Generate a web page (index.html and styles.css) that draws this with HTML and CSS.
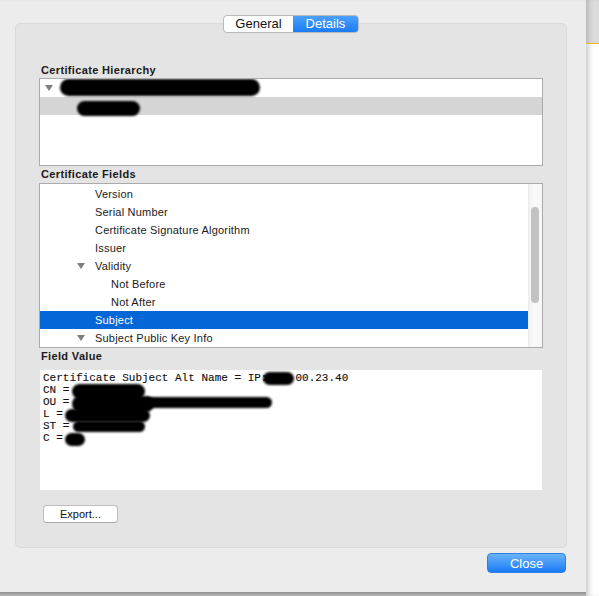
FILE: index.html
```html
<!DOCTYPE html>
<html lang="en">
<head>
    <meta charset="UTF-8">
    <meta name="viewport" content="width=device-width, initial-scale=1.0">
    <title>Certificate Details</title>
    <link rel="stylesheet" href="styles.css">
</head>
<body>
    <div class="screen">
        <div class="window-col">
            <div class="window">
                <div class="group">
                    <div class="tabs">
                        <span class="tab">General</span>
                        <span class="tab active">Details</span>
                    </div>

                    <h4 class="label">Certificate Hierarchy</h4>
                    <div class="list hierarchy">
                        <div class="row">
                            <span class="disclosure root"></span>
                            <span class="redact h1a"></span>
                        </div>
                        <div class="row gray">
                            <span class="redact h2"></span>
                        </div>
                    </div>

                    <h4 class="label">Certificate Fields</h4>
                    <div class="list fields">
                        <div class="rows">
                            <div class="row lvl1">Version</div>
                            <div class="row lvl1">Serial Number</div>
                            <div class="row lvl1">Certificate Signature Algorithm</div>
                            <div class="row lvl1">Issuer</div>
                            <div class="row lvl1"><span class="disclosure"></span>Validity</div>
                            <div class="row lvl2">Not Before</div>
                            <div class="row lvl2">Not After</div>
                            <div class="row lvl1 selected">Subject</div>
                            <div class="row lvl1"><span class="disclosure"></span>Subject Public Key Info</div>
                        </div>
                        <div class="scrollbar"><div class="thumb"></div></div>
                    </div>

                    <h4 class="label value-label">Field Value</h4>
                    <div class="value">
                        <div class="line">Certificate Subject Alt Name = IP:<span class="redact v-ip"></span>00.23.40</div>
                        <div class="line">CN = <span class="redact v-cn"></span></div>
                        <div class="line">OU = <span class="redact v-ou"></span><span class="redact v-ou-tail"></span></div>
                        <div class="line">L = <span class="redact v-l"></span></div>
                        <div class="line">ST = <span class="redact v-st"></span></div>
                        <div class="line">C = <span class="redact v-c"></span></div>
                    </div>

                    <button class="btn export-btn">Export...</button>
                </div>

                <div class="footer">
                    <button class="btn close-btn">Close</button>
                </div>
            </div>
            <div class="bottom-shadow"></div>
        </div>
        <div class="desk">
            <div class="desk-top"></div>
            <div class="desk-line"></div>
        </div>
    </div>
</body>
</html>
```

FILE: styles.css
```css
body {
    margin: 0;
    background: #fff;
    font-family: "Liberation Sans", Arial, sans-serif;
    color: #111;
}
.screen {
    display: flex;
    width: 599px;
    height: 596px;
    overflow: hidden;
}
.window-col {
    width: 586px;
    flex: none;
}
.window {
    height: 592px;
    box-sizing: border-box;
    padding: 23px 19px 0 15px;
    background: linear-gradient(#e6e6e6 0, #ececec 3px);
}
.bottom-shadow {
    height: 4px;
    background: linear-gradient(#8e8e8e, #b9b9b9);
}
.desk {
    flex: 1;
    background: #fff;
    box-shadow: inset 6px 0 6px -4px rgba(0, 0, 0, 0.25);
}
.desk-top {
    height: 43px;
    background: #dcdcdc;
    box-shadow: inset 6px 0 6px -4px rgba(0, 0, 0, 0.2);
}
.desk-line {
    height: 1px;
    background: #f2b51c;
}

/* grouped panel under the tab switcher */
.group {
    height: 525px;
    box-sizing: border-box;
    padding: 0 23px 24px;
    background: #e4e4e4;
    border: 1px solid #d9d9d9;
    border-radius: 5px;
}
.tabs {
    display: flex;
    width: 136px;
    height: 18px;
    box-sizing: border-box;
    margin: -9px auto 0;
    border: 1px solid #b9b9b9;
    border-radius: 4px;
    overflow: hidden;
    background: #fff;
    font-size: 13px;
    line-height: 16px;
}
.tab {
    width: 70px;
    text-align: center;
    color: #111;
}
.tab.active {
    width: 66px;
    background: linear-gradient(#4aa0fb, #1c7cf4);
    color: #fff;
}

.label {
    margin: 30px 0 1px 2px;
    height: 14px;
    font-size: 11px;
    line-height: 14px;
    font-weight: bold;
    letter-spacing: 0.35px;
    color: #1a1a1a;
}
.hierarchy + .label {
    margin-top: 1px;
    margin-bottom: 2px;
}
.value-label {
    margin-top: 1px;
    margin-bottom: 7px;
}

.list {
    background: #fff;
    border: 1px solid #ababab;
    overflow: hidden;
    font-size: 11px;
    letter-spacing: 0.2px;
    color: #1a1a1a;
}
.hierarchy {
    height: 88px;
    box-sizing: border-box;
}
.fields {
    height: 165px;
    box-sizing: border-box;
    display: flex;
}
.row {
    height: 18px;
    line-height: 18px;
    display: flex;
    align-items: center;
    white-space: nowrap;
}
.row.gray {
    background: #d5d5d5;
}
.rows {
    flex: 1;
    padding-top: 1px;
}
.lvl1 {
    padding-left: 55px;
}
.lvl2 {
    padding-left: 71px;
}
.row.selected {
    background: #0566d7;
    color: #fff;
}

/* grey disclosure triangle, expanded */
.disclosure {
    width: 0;
    height: 0;
    border-left: 4px solid transparent;
    border-right: 4px solid transparent;
    border-top: 6px solid #7f7f7f;
    margin-left: -18px;
    margin-right: 10px;
}
.disclosure.root {
    margin-left: 5px;
    margin-right: 7px;
}

.scrollbar {
    width: 14px;
    flex: none;
    background: linear-gradient(90deg, #f1f1f1, #fafafa 40%, #f6f6f6);
    border-left: 1px solid #ececec;
    box-sizing: border-box;
    padding: 23px 2px 0 2px;
}
.thumb {
    width: 8px;
    height: 96px;
    border-radius: 4px;
    background: #c2c2c2;
}

/* monospaced field value box */
.value {
    height: 120px;
    box-sizing: border-box;
    margin: 0 1px;
    padding: 2px 3px;
    background: #fff;
    font-family: "Liberation Mono", "Courier New", monospace;
    font-size: 11px;
    color: #111;
    -webkit-text-stroke: 0.12px #111;
}
.line {
    height: 12px;
    line-height: 12px;
    display: flex;
    align-items: center;
    white-space: pre;
}

/* blacked out text */
.redact {
    display: inline-block;
    flex: none;
    background: #000;
    border-radius: 10px;
    filter: blur(1.2px);
}
.h1a {
    width: 200px;
    height: 17px;
    margin-top: -1px;
}
.h2 {
    width: 63px;
    height: 15px;
    margin-left: 37px;
    margin-top: 5px;
}
.v-ip {
    width: 31px;
    height: 13px;
    margin-left: -4px;
    margin-right: 1px;
}
.v-cn {
    width: 73px;
    height: 15px;
    margin-left: -4px;
    margin-top: 2px;
}
.v-ou {
    width: 82px;
    height: 16px;
    margin-left: -4px;
    margin-top: 4px;
}
.v-ou-tail {
    width: 128px;
    height: 11px;
    margin-left: -10px;
}
.v-l {
    width: 85px;
    height: 13px;
    margin-left: -4px;
    margin-top: 3px;
}
.v-st {
    width: 72px;
    height: 11px;
    margin-left: -3px;
    margin-top: 1px;
}
.v-c {
    width: 20px;
    height: 13px;
    margin-left: -4px;
    margin-top: 2px;
}

.btn {
    display: block;
    font-family: "Liberation Sans", Arial, sans-serif;
    cursor: pointer;
    padding: 0;
}
.export-btn {
    width: 75px;
    height: 18px;
    margin: 15px 0 0 4px;
    background: #fff;
    border: 1px solid #bdbdbd;
    border-bottom-color: #a9a9a9;
    border-radius: 4px;
    font-size: 11px;
    color: #111;
}
.footer {
    display: flex;
    justify-content: flex-end;
    padding: 5px 1px 0 0;
}
.close-btn {
    width: 79px;
    height: 20px;
    background: linear-gradient(#6ab4fb, #1a7bf5);
    border: 1px solid #2d7fe8;
    border-radius: 4px;
    color: #fff;
    font-size: 13px;
}
```
